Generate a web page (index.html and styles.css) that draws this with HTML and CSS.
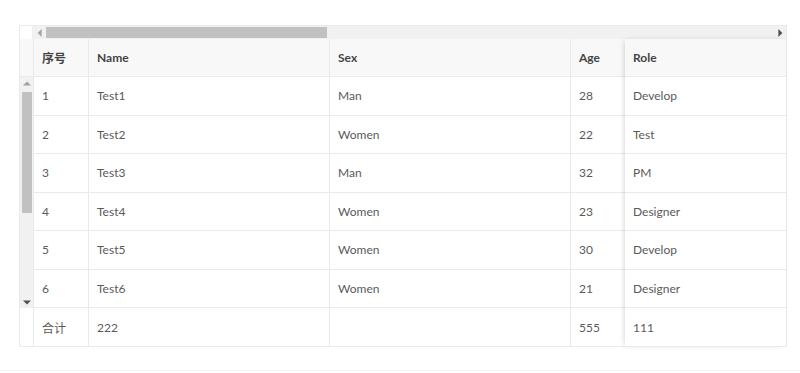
FILE: index.html
```html
<!DOCTYPE html>
<html lang="zh-CN">
<head>
  <meta charset="UTF-8">
  <title>Table</title>
  <link rel="stylesheet" href="styles.css">
</head>
<body>
  <div class="table-wrap">
    <!-- horizontal scrollbar sits on top -->
    <div class="hscroll">
      <div class="corner"></div>
      <div class="htrack">
        <div class="arrow arrow-left"></div>
        <div class="hthumb"></div>
        <div class="hspace"></div>
        <div class="arrow arrow-right"></div>
      </div>
    </div>

    <div class="table-body">
      <div class="vscroll">
        <div class="vhead"></div>
        <div class="vtrack">
          <div class="arrow arrow-up"></div>
          <div class="vthumb"></div>
          <div class="vspace"></div>
          <div class="arrow arrow-down"></div>
        </div>
        <div class="vfoot"></div>
      </div>

      <div class="grid">
        <div class="main">
          <div class="row head">
            <div class="cell c-idx">序号</div>
            <div class="cell c-name">Name</div>
            <div class="cell c-sex">Sex</div>
            <div class="cell c-age">Age</div>
          </div>
          <div class="row">
            <div class="cell c-idx">1</div>
            <div class="cell c-name">Test1</div>
            <div class="cell c-sex">Man</div>
            <div class="cell c-age">28</div>
          </div>
          <div class="row">
            <div class="cell c-idx">2</div>
            <div class="cell c-name">Test2</div>
            <div class="cell c-sex">Women</div>
            <div class="cell c-age">22</div>
          </div>
          <div class="row">
            <div class="cell c-idx">3</div>
            <div class="cell c-name">Test3</div>
            <div class="cell c-sex">Man</div>
            <div class="cell c-age">32</div>
          </div>
          <div class="row">
            <div class="cell c-idx">4</div>
            <div class="cell c-name">Test4</div>
            <div class="cell c-sex">Women</div>
            <div class="cell c-age">23</div>
          </div>
          <div class="row">
            <div class="cell c-idx">5</div>
            <div class="cell c-name">Test5</div>
            <div class="cell c-sex">Women</div>
            <div class="cell c-age">30</div>
          </div>
          <div class="row">
            <div class="cell c-idx">6</div>
            <div class="cell c-name">Test6</div>
            <div class="cell c-sex">Women</div>
            <div class="cell c-age">21</div>
          </div>
          <div class="row foot">
            <div class="cell c-idx">合计</div>
            <div class="cell c-name">222</div>
            <div class="cell c-sex"></div>
            <div class="cell c-age">555</div>
          </div>
        </div>

        <div class="fixed-right">
          <div class="row head"><div class="cell c-role">Role</div></div>
          <div class="row"><div class="cell c-role">Develop</div></div>
          <div class="row"><div class="cell c-role">Test</div></div>
          <div class="row"><div class="cell c-role">PM</div></div>
          <div class="row"><div class="cell c-role">Designer</div></div>
          <div class="row"><div class="cell c-role">Develop</div></div>
          <div class="row"><div class="cell c-role">Designer</div></div>
          <div class="row foot"><div class="cell c-role">111</div></div>
        </div>
      </div>
    </div>
  </div>

  <div class="page-line"></div>
</body>
</html>
```

FILE: styles.css
```css
:root {
  --border: #e8eaec;
  --head-bg: #f8f8f9;
  --text: #5a5a5a;
  --head-text: #444;
  --track: #f1f1f1;
  --thumb: #c1c1c1;
}

* {
  box-sizing: border-box;
  margin: 0;
  padding: 0;
}

body {
  font-family: Lato, 'Noto Sans CJK SC', sans-serif;
  font-size: 12px;
  color: var(--text);
  background: #fff;
  padding: 25px 0 0 19px;
}

.table-wrap {
  width: 768px;
  border: 1px solid var(--border);
  border-bottom: none;
}

/* scrollbars */
.hscroll {
  display: flex;
  height: 13px;
}

.corner {
  width: 13px;
  background: #fff;
  border-right: 1px solid #f0f0f0;
}

.htrack {
  flex: 1;
  display: flex;
  align-items: center;
  background: var(--track);
}

.hthumb {
  width: 281px;
  height: 11px;
  background: var(--thumb);
}

.hspace {
  flex: 1;
}

.arrow {
  width: 13px;
  height: 13px;
  position: relative;
  flex-shrink: 0;
}

.arrow::after {
  content: '';
  position: absolute;
  left: 50%;
  top: 50%;
  width: 0;
  height: 0;
  border: 4px solid transparent;
}

.arrow-left::after {
  border-right-color: #a3a3a3;
  border-left-width: 0;
  transform: translate(-60%, -50%);
}

.arrow-right::after {
  border-left-color: #505050;
  border-right-width: 0;
  transform: translate(-40%, -50%);
}

.arrow-up::after {
  border-bottom-color: #a3a3a3;
  border-top-width: 0;
  transform: translate(-50%, -60%);
}

.arrow-down::after {
  border-top-color: #505050;
  border-bottom-width: 0;
  transform: translate(-50%, -40%);
}

.table-body {
  display: flex;
}

.vscroll {
  width: 13px;
  display: flex;
  flex-direction: column;
}

.vhead {
  height: 38px;
  background: var(--head-bg);
  border-bottom: 1px solid var(--border);
}

.vtrack {
  height: 231px;
  display: flex;
  flex-direction: column;
  align-items: center;
  background: var(--track);
}

.vthumb {
  width: 10px;
  height: 121px;
  margin-top: 2px;
  background: var(--thumb);
}

.vspace {
  flex: 1;
}

.vfoot {
  height: 39px;
  border-bottom: 1px solid var(--border);
}

/* table grid */
.grid {
  flex: 1;
  display: flex;
  border-left: 1px solid var(--border);
}

.main {
  flex: 1;
}

.fixed-right {
  width: 161px;
  position: relative;
  background: #fff;
  box-shadow: -2px 0 6px -2px rgba(0, 0, 0, 0.2);
}

.row {
  display: flex;
  height: 38.5px;
  border-bottom: 1px solid var(--border);
}

.row.head {
  height: 38px;
  background: var(--head-bg);
  color: var(--head-text);
  font-weight: 700;
}

.row.foot {
  height: 39px;
}

.cell {
  display: flex;
  align-items: center;
  padding-left: 8px;
  border-right: 1px solid var(--border);
  white-space: nowrap;
}

.c-idx { width: 55px; }
.c-name { width: 241px; }
.c-sex { width: 241px; }
.c-age { width: 54px; border-right: none; }
.c-role { width: 161px; border-right: none; }

.page-line {
  margin: 23px 0 0 -19px;
  border-top: 1px solid #f3f3f3;
}
```
